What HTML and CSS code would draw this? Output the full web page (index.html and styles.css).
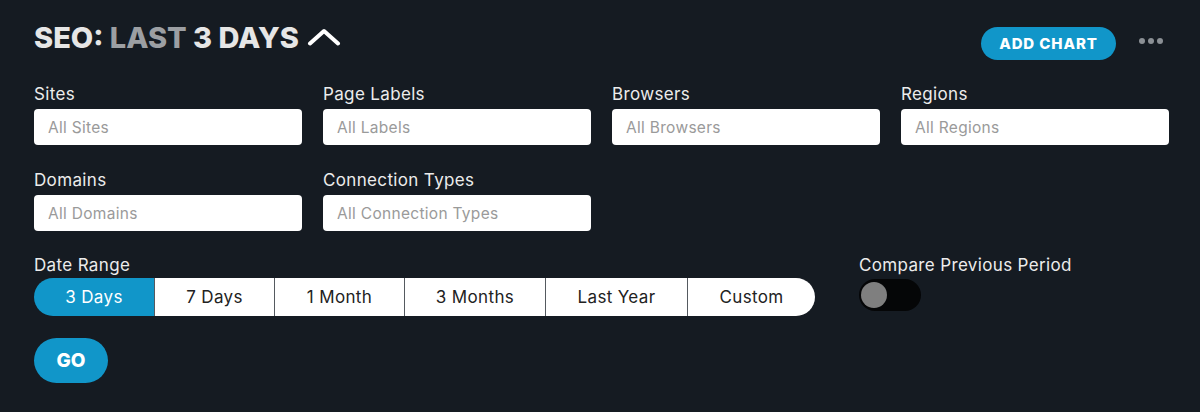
FILE: index.html
```html
<!DOCTYPE html>
<html lang="en">
<head>
  <meta charset="UTF-8" />
  <meta name="viewport" content="width=device-width, initial-scale=1.0"/>
  <title>SEO: Last 3 Days</title>
  <link rel="stylesheet" href="styles.css">
</head>
<body>
  <div class="panel">
    <div class="header">
      <h1 class="title">SEO: <span class="muted">LAST</span> 3 DAYS <svg class="chevron" width="34" height="18" viewBox="0 0 34 18" aria-hidden="true"><path d="M3 15.5 L17 3 L31 15.5" fill="none" stroke="#ffffff" stroke-width="4" stroke-linecap="round" stroke-linejoin="round"/></svg></h1>
      <div class="actions">
        <button class="btn-add">ADD CHART</button>
        <span class="dots"><i></i><i></i><i></i></span>
      </div>
    </div>

    <div class="filters">
      <div class="field">
        <label>Sites</label>
        <input type="text" placeholder="All Sites">
      </div>
      <div class="field">
        <label>Page Labels</label>
        <input type="text" placeholder="All Labels">
      </div>
      <div class="field">
        <label>Browsers</label>
        <input type="text" placeholder="All Browsers">
      </div>
      <div class="field">
        <label>Regions</label>
        <input type="text" placeholder="All Regions">
      </div>
      <div class="field">
        <label>Domains</label>
        <input type="text" placeholder="All Domains">
      </div>
      <div class="field">
        <label>Connection Types</label>
        <input type="text" placeholder="All Connection Types">
      </div>
    </div>

    <div class="range-row">
      <div class="range">
        <label>Date Range</label>
        <div class="segments">
          <button class="seg active">3 Days</button>
          <button class="seg">7 Days</button>
          <button class="seg">1 Month</button>
          <button class="seg">3 Months</button>
          <button class="seg">Last Year</button>
          <button class="seg">Custom</button>
        </div>
      </div>
      <div class="compare">
        <label>Compare Previous Period</label>
        <div class="toggle"><span class="knob"></span></div>
      </div>
    </div>

    <button class="btn-go">GO</button>
  </div>
</body>
</html>
```

FILE: styles.css
```css
body {
  margin: 0;
  background-color: #151b22;
  font-family: Inter, 'Noto Sans', sans-serif;
  color: #ececec;
}

.panel {
  height: 412px;
  box-sizing: border-box;
  padding: 20px 31px 0 34px;
}

.header {
  display: flex;
  justify-content: space-between;
  align-items: flex-start;
  height: 36px;
}

.title {
  margin: 0;
  font-size: 29px;
  line-height: 36px;
  font-weight: 800;
  color: #e6e6e6;
  white-space: nowrap;
}

.title .muted { color: #9c9fa3; }

.chevron {
  margin-left: 2px;
  vertical-align: 2px;
}

.actions {
  display: flex;
  align-items: center;
  gap: 23px;
  margin-top: 7px;
}

.btn-add {
  height: 33px;
  width: 135px;
  border: none;
  border-radius: 17px;
  background-color: #1196c9;
  color: white;
  font-family: inherit;
  font-weight: 800;
  font-size: 15px;
  letter-spacing: 0.9px;
  cursor: pointer;
}

.dots {
  display: flex;
  gap: 3px;
  margin-right: 6px;
  margin-top: -6px;
}

.dots i {
  width: 6px;
  height: 6px;
  border-radius: 50%;
  background: #8b9095;
}

label {
  display: block;
  font-size: 17px;
  line-height: 20px;
  letter-spacing: 0.35px;
  color: #ececec;
}

.filters {
  display: grid;
  grid-template-columns: repeat(4, 1fr);
  column-gap: 21px;
  row-gap: 25px;
  margin-top: 28px;
}

.field label { margin-bottom: 5px; }

.field input {
  width: 100%;
  box-sizing: border-box;
  height: 36px;
  border: none;
  border-radius: 4px;
  padding: 0 14px;
  font-family: inherit;
  font-size: 15.5px;
  letter-spacing: 0.3px;
  color: #333;
  background: white;
}

.field input::placeholder { color: #9a9a9a; }

.range-row {
  display: flex;
  gap: 44px;
  margin-top: 24px;
}

.range label,
.compare label { margin-bottom: 3px; }

.segments {
  display: flex;
  height: 38px;
}

.seg {
  border: none;
  border-left: 1px solid #555a60;
  background: white;
  color: #222;
  font-family: inherit;
  font-size: 17px;
  letter-spacing: 0.35px;
  padding: 0;
  cursor: pointer;
}

.seg:nth-child(1) { width: 120px; border-left: none; border-radius: 19px 0 0 19px; }
.seg:nth-child(2) { width: 120px; }
.seg:nth-child(3) { width: 130px; }
.seg:nth-child(4) { width: 141px; }
.seg:nth-child(5) { width: 142px; }
.seg:nth-child(6) { width: 128px; border-radius: 0 19px 19px 0; }

.seg.active {
  background-color: #1196c9;
  color: white;
}

.toggle {
  width: 62px;
  height: 32px;
  margin-top: 4px;
  border-radius: 16px;
  background: #050607;
  display: flex;
  align-items: center;
  padding-left: 2px;
  box-sizing: border-box;
}

.knob {
  width: 26px;
  height: 26px;
  border-radius: 50%;
  background: #7f7f7f;
}

.btn-go {
  margin-top: 22px;
  width: 74px;
  height: 45px;
  border: none;
  border-radius: 23px;
  background-color: #1196c9;
  color: white;
  font-family: inherit;
  font-weight: 800;
  font-size: 19px;
  cursor: pointer;
}
```
